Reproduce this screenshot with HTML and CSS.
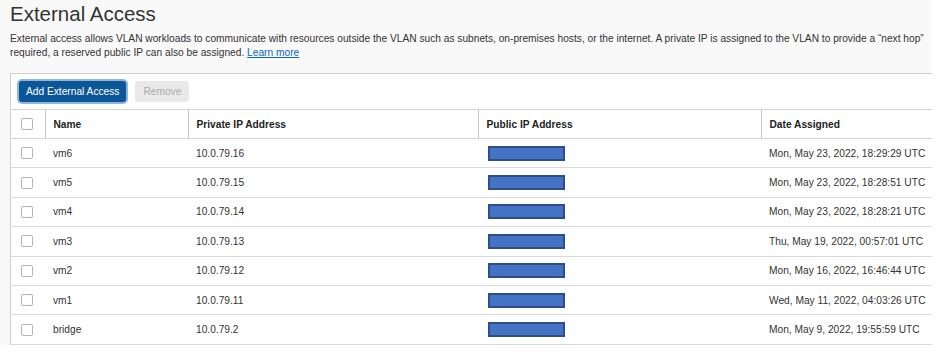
FILE: index.html
```html
<!DOCTYPE html>
<html lang="en">
<head>
  <meta charset="UTF-8">
  <title>External Access</title>
  <link rel="stylesheet" href="styles.css">
</head>
<body>
  <div class="page">
    <h1>External Access</h1>
    <p class="intro">External access allows VLAN workloads to communicate with resources outside the VLAN such as subnets, on-premises hosts, or the internet. A private IP is assigned to the VLAN to provide a &ldquo;next hop&rdquo;<br>required, a reserved public IP can also be assigned. <a href="#">Learn more</a></p>

    <div class="panel">
      <div class="toolbar">
        <button class="btn btn-primary">Add External Access</button>
        <button class="btn btn-disabled" disabled>Remove</button>
      </div>

      <table class="grid">
        <colgroup>
          <col class="c-check">
          <col class="c-name">
          <col class="c-private">
          <col class="c-public">
          <col class="c-date">
        </colgroup>
        <thead>
          <tr>
            <th><span class="box"></span></th>
            <th>Name</th>
            <th>Private IP Address</th>
            <th>Public IP Address</th>
            <th>Date Assigned</th>
          </tr>
        </thead>
        <tbody>
          <tr>
            <td><span class="box"></span></td>
            <td>vm6</td>
            <td>10.0.79.16</td>
            <td><span class="redact"></span></td>
            <td>Mon, May 23, 2022, 18:29:29 UTC</td>
          </tr>
          <tr>
            <td><span class="box"></span></td>
            <td>vm5</td>
            <td>10.0.79.15</td>
            <td><span class="redact"></span></td>
            <td>Mon, May 23, 2022, 18:28:51 UTC</td>
          </tr>
          <tr>
            <td><span class="box"></span></td>
            <td>vm4</td>
            <td>10.0.79.14</td>
            <td><span class="redact"></span></td>
            <td>Mon, May 23, 2022, 18:28:21 UTC</td>
          </tr>
          <tr>
            <td><span class="box"></span></td>
            <td>vm3</td>
            <td>10.0.79.13</td>
            <td><span class="redact"></span></td>
            <td>Thu, May 19, 2022, 00:57:01 UTC</td>
          </tr>
          <tr>
            <td><span class="box"></span></td>
            <td>vm2</td>
            <td>10.0.79.12</td>
            <td><span class="redact"></span></td>
            <td>Mon, May 16, 2022, 16:46:44 UTC</td>
          </tr>
          <tr>
            <td><span class="box"></span></td>
            <td>vm1</td>
            <td>10.0.79.11</td>
            <td><span class="redact"></span></td>
            <td>Wed, May 11, 2022, 04:03:26 UTC</td>
          </tr>
          <tr>
            <td><span class="box"></span></td>
            <td>bridge</td>
            <td>10.0.79.2</td>
            <td><span class="redact"></span></td>
            <td>Mon, May 9, 2022, 19:55:59 UTC</td>
          </tr>
        </tbody>
      </table>
    </div>
  </div>
</body>
</html>
```

FILE: styles.css
```css
* {
  margin: 0;
  padding: 0;
  box-sizing: border-box;
}

body {
  margin: 0;
  background: #fff;
  font-family: "Liberation Sans", Arial, sans-serif;
  color: #333;
}

/* screenshot area, cut at the right and bottom */
.page {
  width: 932px;
  height: 345px;
  overflow: hidden;
  background: #f9f9f9;
  padding-left: 10px;
}

h1 {
  font-size: 20.5px;
  font-weight: normal;
  line-height: 25px;
  padding-top: 1px;
  color: #333;
}

.intro {
  margin-top: 6px;
  font-size: 10.2px;
  line-height: 14px;
  white-space: nowrap;
  color: #333;
}

.intro a {
  color: #0b66c2;
  text-decoration: underline;
}

.panel {
  margin-top: 13px;
  width: 940px;
  background: #fff;
  border: 1px solid #cfcfcf;
  border-right: none;
}

.toolbar {
  display: flex;
  align-items: center;
  gap: 9px;
  padding: 7px 8px;
}

.btn {
  height: 21px;
  padding: 0 7px;
  font-family: inherit;
  font-size: 10.2px;
  border: none;
  border-radius: 3px;
}

.btn-primary {
  background: #0b5696;
  color: #fff;
  box-shadow: 0 0 0 2px #8fb6e0;
}

.btn-disabled {
  padding: 0 8px;
  background: #e9e9e9;
  color: #a9a9a9;
}

/* table */
.grid {
  width: 100%;
  table-layout: fixed;
  border-collapse: collapse;
  font-size: 10.2px;
}

.c-check { width: 34px; }
.c-name { width: 143px; }
.c-private { width: 290px; }
.c-public { width: 283px; }

.grid th,
.grid td {
  text-align: left;
  padding: 0 8px;
  white-space: nowrap;
  overflow: hidden;
}

.grid th {
  height: 29px;
  font-weight: bold;
  color: #222;
  border-top: 1px solid #d4d4d4;
  border-bottom: 1px solid #d4d4d4;
  border-left: 1px solid #c9c9c9;
}

.grid th:first-child {
  border-left: none;
}

.grid td {
  height: 29.4px;
  color: #333;
  border-bottom: 1px solid #dadada;
}

.grid th:first-child,
.grid td:first-child {
  padding: 0 0 0 10px;
}

.box {
  display: block;
  width: 12px;
  height: 12px;
  border: 1px solid #b5b5b5;
  border-radius: 2px;
  background: #fff;
}

.grid td:nth-child(4) {
  padding-left: 10px;
}

.redact {
  display: block;
  width: 77px;
  height: 15px;
  background: #4472c4;
  border: 2px solid #2c4f8c;
}
```
